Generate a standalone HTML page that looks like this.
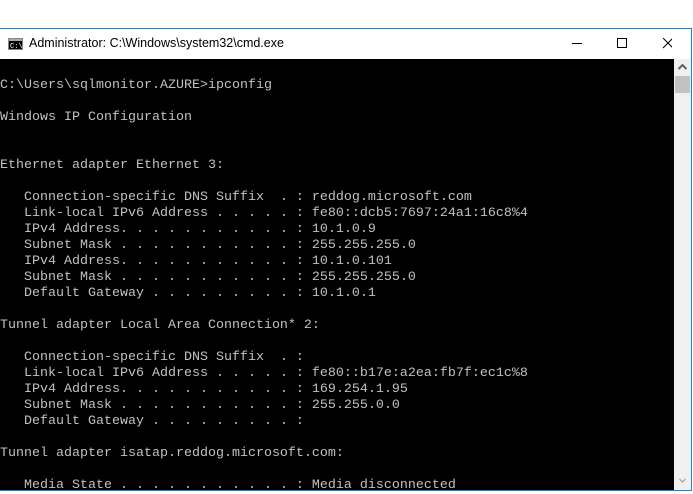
<!DOCTYPE html>
<html><head><meta charset="utf-8"><style>
html,body{margin:0;padding:0;width:693px;height:494px;background:#fff;overflow:hidden;position:relative}
#top{position:absolute;left:0;top:28px;width:692px;height:1px;background:#1883d7}
#rb{position:absolute;left:691px;top:28px;width:1px;height:463px;background:#1883d7}
#bb{position:absolute;left:0;top:490px;width:692px;height:1px;background:#1883d7}
#title{position:absolute;left:0;top:29px;width:691px;height:30px;background:#fff}
#title span{position:absolute;left:29px;top:7px;font:12.5px "Liberation Sans",sans-serif;color:#000}
#con{position:absolute;left:0;top:59px;width:674px;height:431px;background:#000;overflow:hidden}
pre{margin:0;position:absolute;left:0;top:19px;font:13.33px/16px "Liberation Mono",monospace;color:#c0c0c0}
#sb{position:absolute;left:674px;top:59px;width:17px;height:431px;background:#f0f0f0}
#thumb{position:absolute;left:1px;top:17px;width:15px;height:17px;background:#c2c2c2}
</style></head><body>
<div id="top"></div><div id="title">
<svg style="position:absolute;left:8px;top:9px" width="15" height="12"><rect x="0" y="0" width="15" height="12" fill="#000"/><rect x="0.5" y="0.5" width="14" height="11" fill="none" stroke="#888"/><rect x="1" y="1" width="13" height="2" fill="#aaa"/><text x="2" y="10" font-size="7" fill="#fff" font-family="Liberation Mono">C:\</text></svg>
<span>Administrator: C:\Windows\system32\cmd.exe</span>
</div>
<svg style="position:absolute;left:572px;top:37px" width="100" height="14">
<line x1="0" y1="6.5" x2="10" y2="6.5" stroke="#000" stroke-width="1"/>
<rect x="45.5" y="1.5" width="9" height="9" fill="none" stroke="#000"/>
<path d="M91 1 L101 11 M101 1 L91 11" stroke="#000" stroke-width="1" fill="none"/>
</svg>
<div id="rb"></div>
<div id="con"><pre>C:\Users\sqlmonitor.AZURE>ipconfig

Windows IP Configuration


Ethernet adapter Ethernet 3:

   Connection-specific DNS Suffix  . : reddog.microsoft.com
   Link-local IPv6 Address . . . . . : fe80::dcb5:7697:24a1:16c8%4
   IPv4 Address. . . . . . . . . . . : 10.1.0.9
   Subnet Mask . . . . . . . . . . . : 255.255.255.0
   IPv4 Address. . . . . . . . . . . : 10.1.0.101
   Subnet Mask . . . . . . . . . . . : 255.255.255.0
   Default Gateway . . . . . . . . . : 10.1.0.1

Tunnel adapter Local Area Connection* 2:

   Connection-specific DNS Suffix  . :
   Link-local IPv6 Address . . . . . : fe80::b17e:a2ea:fb7f:ec1c%8
   IPv4 Address. . . . . . . . . . . : 169.254.1.95
   Subnet Mask . . . . . . . . . . . : 255.255.0.0
   Default Gateway . . . . . . . . . :

Tunnel adapter isatap.reddog.microsoft.com:

   Media State . . . . . . . . . . . : Media disconnected</pre></div>
<div id="sb"><svg style="position:absolute;left:4px;top:5px" width="9" height="6"><path d="M0.5 5 L4.5 1 L8.5 5" stroke="#606060" stroke-width="2" fill="none"/></svg><div id="thumb"></div>
<svg style="position:absolute;left:5px;top:419px" width="7" height="5"><path d="M0.5 1 L3.5 4 L6.5 1" stroke="#a0a0a0" stroke-width="1.2" fill="none"/></svg></div>
<div id="bb"></div>
</body></html>
